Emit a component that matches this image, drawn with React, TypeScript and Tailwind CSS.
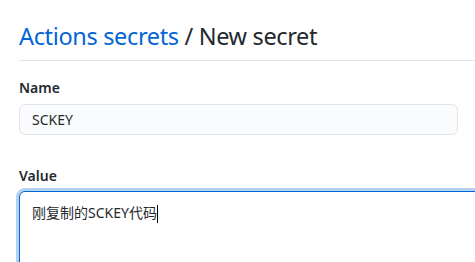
export default function App() {
  return (
    <div
      className="w-[475px] h-[262px] overflow-hidden bg-white text-[#24292e]"
      style={{ fontFamily: '"Noto Sans", "Noto Sans CJK SC", sans-serif' }}
    >
      <div className="pl-[19px] w-[520px]">
        {/* Header */}
        <div className="pt-[20px] pb-[8px] border-b border-[#e1e4e8]">
          <h1 className="text-[23.5px] leading-[32px] font-normal tracking-[-0.35px]">
            <span className="text-[#0366d6]">Actions secrets</span> / New secret
          </h1>
        </div>

        {/* Name */}
        <div className="mt-[17px]">
          <label className="block text-[14px] leading-[20px] font-semibold mb-[6px]">Name</label>
          <div className="w-[439px] h-[31px] rounded-[6px] border border-[#e1e4e8] bg-[#fafbfc] flex items-center px-[12px] text-[14px]">
            SCKEY
          </div>
        </div>

        {/* Value */}
        <div className="mt-[31px]">
          <label className="block text-[14px] leading-[20px] font-semibold mb-[5px]">Value</label>
          <div className="h-[120px] rounded-[6px] border border-[#0366d6] ring-[3px] ring-[#0366d6]/30 bg-white px-[12px] pt-[10px] text-[14px]">
            <span>刚复制的SCKEY代码</span>
            <span className="inline-block w-px h-[18px] bg-black align-middle"></span>
          </div>
        </div>
      </div>
    </div>
  );
}
